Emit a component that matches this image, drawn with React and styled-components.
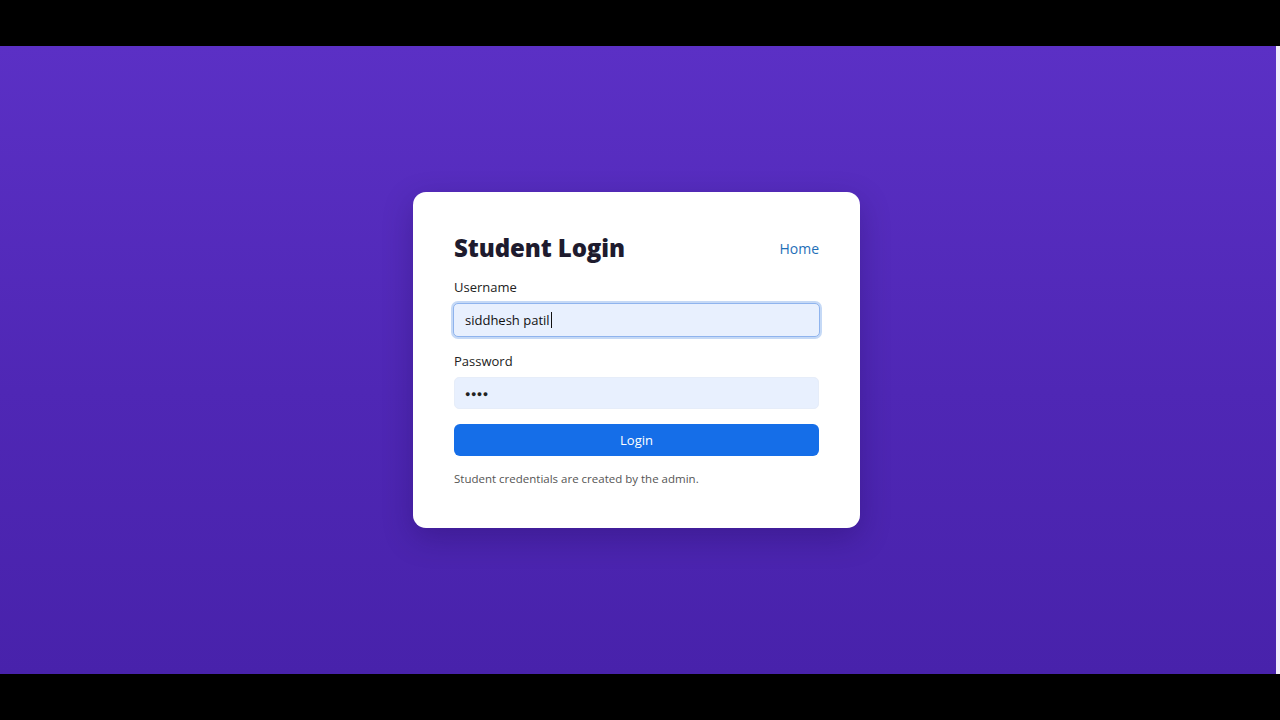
import React from "react";
import styled, { createGlobalStyle } from "styled-components";

const Global = createGlobalStyle`
  html, body { margin: 0; padding: 0; background: #000; }
  body { font-family: "Open Sans", "Liberation Sans", sans-serif; }
  * { box-sizing: border-box; }
`;

const Screen = styled.div`
  width: 1280px;
  height: 720px;
  background: #000;
  padding: 46px 0;
  display: flex;
`;

const Stage = styled.main`
  flex: 1;
  display: flex;
  align-items: center;
  justify-content: center;
  background: linear-gradient(180deg, #5b30c5 0%, #4f27b5 55%, #4822ab 100%);
  border-right: 4px solid #f1ecfa;
`;

const Card = styled.section`
  width: 447px;
  background: #fff;
  border-radius: 13px;
  padding: 38px 41px 42px;
  box-shadow: 0 10px 30px rgba(20, 0, 60, 0.25);
  margin-left: -3px;
`;

const Header = styled.div`
  display: flex;
  align-items: center;
  justify-content: space-between;
  margin-bottom: 12px;
`;

const Title = styled.h1`
  margin: 0;
  font-size: 24px;
  font-weight: 800;
  color: #1e1b2e;
  letter-spacing: -0.1px;
  line-height: 36px;
`;

const HomeLink = styled.a`
  color: #1f6fb8;
  font-size: 14px;
  text-decoration: none;
`;

const Label = styled.label`
  display: block;
  font-size: 13px;
  color: #222;
  margin-bottom: 7px;
  line-height: 18px;
`;

const Group = styled.div`
  margin-bottom: ${(p) => p.$gap || 14}px;
`;

const FieldBox = styled.div`
  height: ${(p) => (p.$focused ? 34 : 32)}px;
  margin: ${(p) => (p.$focused ? "0 -1px" : "0")};
  display: flex;
  align-items: center;
  padding: 0 ${(p) => (p.$focused ? 11 : 10)}px;
  background: #e8f0fe;
  border: 1px solid ${(p) => (p.$focused ? "#8fb4ee" : "#e6edf9")};
  border-radius: 5px;
  box-shadow: ${(p) => (p.$focused ? "0 0 0 2px #c5d9f6" : "none")};
  font-size: 13px;
  color: #111;
`;

const Caret = styled.span`
  display: inline-block;
  width: 1px;
  height: 16px;
  background: #111;
  margin-left: 1px;
`;

const Dots = styled.span`
  font-size: 9px;
  letter-spacing: 0.5px;
  color: #222;
`;

const Button = styled.button`
  width: 100%;
  height: 32px;
  border: none;
  border-radius: 6px;
  background: #156ee8;
  color: #fff;
  font-family: inherit;
  font-size: 13px;
  cursor: pointer;
  margin-top: 1px;
`;

const Note = styled.p`
  margin: 15px 0 0;
  font-size: 11.5px;
  color: #555;
`;

export default function App() {
  return (
    <>
      <Global />
      <Screen>
        <Stage>
          <Card>
            <Header>
              <Title>Student Login</Title>
              <HomeLink href="#">Home</HomeLink>
            </Header>
            <Group $gap={15}>
              <Label>Username</Label>
              <FieldBox $focused>
                siddhesh patil<Caret />
              </FieldBox>
            </Group>
            <Group $gap={14}>
              <Label>Password</Label>
              <FieldBox>
                <Dots>●●●●</Dots>
              </FieldBox>
            </Group>
            <Button>Login</Button>
            <Note>Student credentials are created by the admin.</Note>
          </Card>
        </Stage>
      </Screen>
    </>
  );
}
